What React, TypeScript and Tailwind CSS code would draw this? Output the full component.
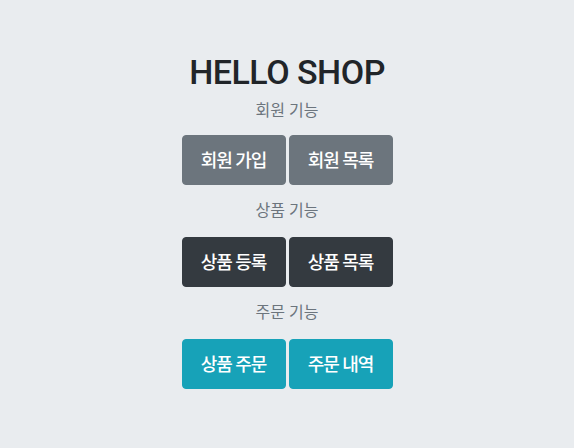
const groups = [
  {
    title: "회원 기능",
    color: "bg-[#6c757d] border-[#6c757d]",
    actions: ["회원 가입", "회원 목록"],
  },
  {
    title: "상품 기능",
    color: "bg-[#343a40] border-[#343a40]",
    actions: ["상품 등록", "상품 목록"],
  },
  {
    title: "주문 기능",
    color: "bg-[#17a2b8] border-[#17a2b8]",
    actions: ["상품 주문", "주문 내역"],
  },
];

export default function App() {
  return (
    <div
      className="min-h-[448px] w-full bg-[#e9ecef] flex flex-col items-center pt-[52px]"
      style={{ fontFamily: "Roboto, 'Noto Sans CJK KR', sans-serif" }}
    >
      <h1 className="text-[34px] leading-[40px] font-medium text-[#212529] tracking-[-0.5px]">
        HELLO SHOP
      </h1>
      {groups.map((group, i) => (
        <div key={group.title} className="flex flex-col items-center">
          <p
            className={`text-[16px] leading-[24px] text-[#6c757d] ${
              i === 0 ? "mt-[7px] mb-[12px]" : "mt-[14px] mb-[14px]"
            }`}
          >
            {group.title}
          </p>
          <div className="flex gap-[3px]">
            {group.actions.map(action => (
              <button
                key={action}
                className={`w-[104px] h-[50px] rounded-[4px] border text-white text-[18px] font-medium tracking-[-1px] ${group.color}`}
              >
                {action}
              </button>
            ))}
          </div>
        </div>
      ))}
    </div>
  );
}
